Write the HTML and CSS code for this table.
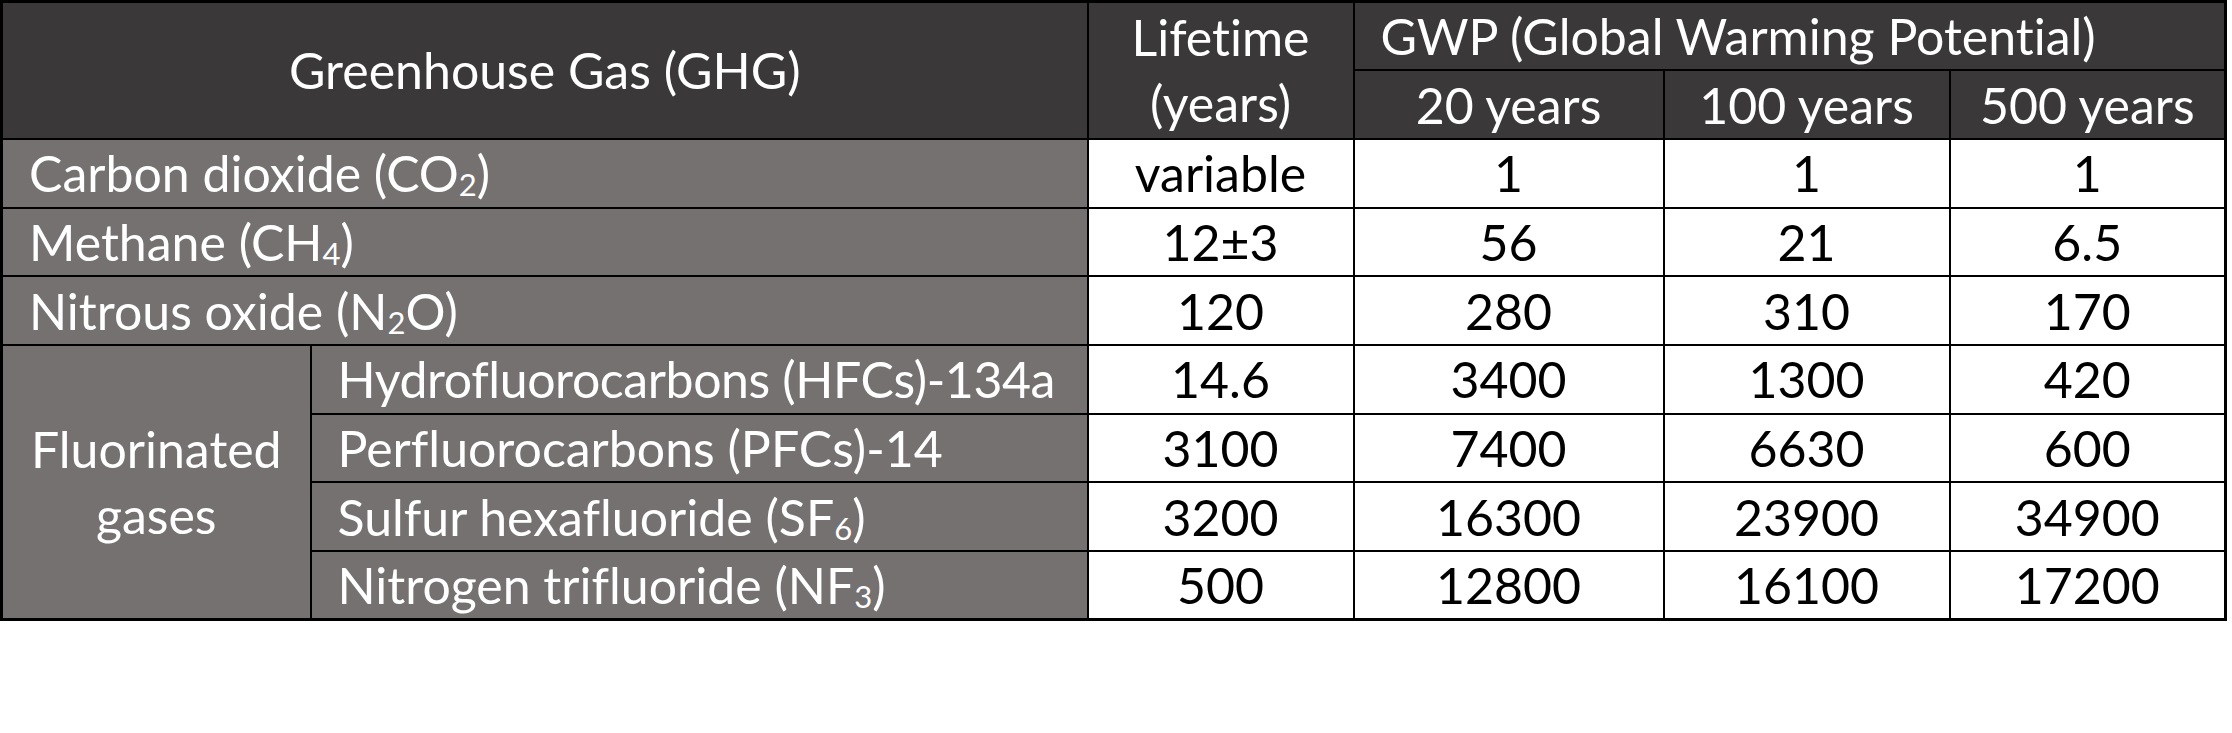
FILE: index.html
```html
<!DOCTYPE html>
<html lang="en">
<head>
<meta charset="utf-8">
<title>Greenhouse gases</title>
<link rel="stylesheet" href="styles.css">
</head>
<body>
<table class="ghg">
  <colgroup>
    <col class="c-a"><col class="c-b"><col class="c-life"><col class="c-20"><col class="c-100"><col class="c-500">
  </colgroup>
  <thead>
    <tr class="row">
      <th class="head center" colspan="2" rowspan="2">Greenhouse Gas (GHG)</th>
      <th class="head center" rowspan="2">Lifetime<br>(years)</th>
      <th class="head left" colspan="3">GWP (Global Warming Potential)</th>
    </tr>
    <tr class="row">
      <th class="head center">20 years</th>
      <th class="head center">100 years</th>
      <th class="head center">500 years</th>
    </tr>
  </thead>
  <tbody>
    <tr class="row">
      <th class="label" colspan="2">Carbon dioxide (CO<sub>2</sub>)</th>
      <td>variable</td><td>1</td><td>1</td><td>1</td>
    </tr>
    <tr class="row">
      <th class="label" colspan="2">Methane (CH<sub>4</sub>)</th>
      <td>12±3</td><td>56</td><td>21</td><td>6.5</td>
    </tr>
    <tr class="row">
      <th class="label" colspan="2">Nitrous oxide (N<sub>2</sub>O)</th>
      <td>120</td><td>280</td><td>310</td><td>170</td>
    </tr>
    <tr class="row">
      <th class="label center group" rowspan="4">Fluorinated<br>gases</th>
      <th class="label sub-label tight">Hydrofluorocarbons (HFCs)-134a</th>
      <td>14.6</td><td>3400</td><td>1300</td><td>420</td>
    </tr>
    <tr class="row">
      <th class="label sub-label">Perfluorocarbons (PFCs)-14</th>
      <td>3100</td><td>7400</td><td>6630</td><td>600</td>
    </tr>
    <tr class="row">
      <th class="label sub-label">Sulfur hexafluoride (SF<sub>6</sub>)</th>
      <td>3200</td><td>16300</td><td>23900</td><td>34900</td>
    </tr>
    <tr class="row">
      <th class="label sub-label">Nitrogen trifluoride (NF<sub>3</sub>)</th>
      <td>500</td><td>12800</td><td>16100</td><td>17200</td>
    </tr>
  </tbody>
</table>
</body>
</html>
```

FILE: styles.css
```css
html, body {
  margin: 0;
  padding: 0;
  background: #ffffff;
}

body {
  font-family: Lato, "Open Sans", "Liberation Sans", sans-serif;
  font-variant-ligatures: none;
  font-feature-settings: "liga" 0;
}

.ghg {
  border-collapse: collapse;
  table-layout: fixed;
  width: 2224px;
  font-size: 50px;
  line-height: 66px;
  border: 3px solid #000;
}

.c-a { width: 309px; }
.c-b { width: 777px; }
.c-life { width: 266px; }
.c-20 { width: 310px; }
.c-100 { width: 286px; }
.c-500 { width: 276px; }

.row {
  height: 68.7px;
}

.ghg th,
.ghg td {
  border: 2px solid #000;
  padding: 0;
  font-weight: 400;
  vertical-align: middle;
  white-space: nowrap;
}

.ghg td {
  text-align: center;
  color: #000;
  background: #ffffff;
}

.head {
  background: #3a3838;
  color: #ffffff;
}

.center {
  text-align: center;
}

.left {
  text-align: left;
  padding-left: 26px !important;
}

.label {
  background: #757171;
  color: #ffffff;
  text-align: left;
  padding-left: 26px !important;
}

.label.center {
  text-align: center;
  padding-left: 0 !important;
}

.tight {
  letter-spacing: -0.4px;
}

.group {
  line-height: 66px;
}

.ghg sub {
  font-size: 0.62em;
  line-height: 0;
  vertical-align: -0.12em;
}
```
